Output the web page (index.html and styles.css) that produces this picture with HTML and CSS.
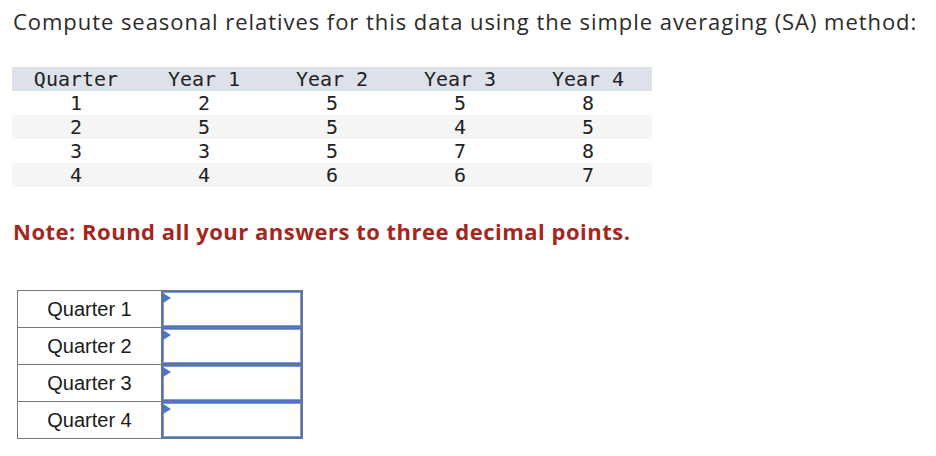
FILE: index.html
```html
<!DOCTYPE html>
<html>
<head>
<meta charset="utf-8">
<link rel="stylesheet" href="styles.css">
</head>
<body>
<p class="prompt">Compute seasonal relatives for this data using the simple averaging (SA) method:</p>
<table class="data">
  <thead>
    <tr><th>Quarter</th><th>Year 1</th><th>Year 2</th><th>Year 3</th><th>Year 4</th></tr>
  </thead>
  <tbody>
    <tr><td>1</td><td>2</td><td>5</td><td>5</td><td>8</td></tr>
    <tr><td>2</td><td>5</td><td>5</td><td>4</td><td>5</td></tr>
    <tr><td>3</td><td>3</td><td>5</td><td>7</td><td>8</td></tr>
    <tr><td>4</td><td>4</td><td>6</td><td>6</td><td>7</td></tr>
  </tbody>
</table>
<p class="note">Note: Round all your answers to three decimal points.</p>
<table class="answers">
  <tr><td class="label">Quarter 1</td><td class="field"><div class="input"><span class="flag"></span></div></td></tr>
  <tr><td class="label">Quarter 2</td><td class="field"><div class="input"><span class="flag"></span></div></td></tr>
  <tr><td class="label">Quarter 3</td><td class="field"><div class="input"><span class="flag"></span></div></td></tr>
  <tr><td class="label">Quarter 4</td><td class="field"><div class="input"><span class="flag"></span></div></td></tr>
</table>
</body>
</html>
```
FILE: styles.css
```css
html, body {
  margin: 0;
  padding: 0;
  background: #ffffff;
}
body {
  padding: 0 0 0 13px;
  color: #222222;
  font-family: "Open Sans", "Liberation Sans", sans-serif;
}
.prompt {
  margin: 7px 0 0 0;
  font-size: 22px;
  line-height: 28px;
  letter-spacing: 0.95px;
  color: #2b2b2b;
  white-space: nowrap;
}
.data {
  margin: 32px 0 0 -1px;
  border-collapse: collapse;
  font-family: "DejaVu Sans Mono", monospace;
  font-size: 20px;
  color: #222222;
}
.data th, .data td {
  width: 128px;
  padding: 0;
  height: 24px;
  line-height: 24px;
  text-align: center;
  font-weight: normal;
}
.data thead tr {
  background: #dde1ea;
}
.data tbody tr:nth-child(even) {
  background: #f5f5f5;
}
.note {
  margin: 30px 0 0 0;
  font-size: 22px;
  line-height: 28px;
  letter-spacing: 0.5px;
  font-weight: 700;
  color: #a3271d;
  white-space: nowrap;
}
.answers {
  margin: 45px 0 0 4px;
  border-collapse: collapse;
  font-family: "Liberation Sans", Arial, sans-serif;
  font-size: 20px;
  color: #1a1a1a;
}
.answers td {
  border: 1px solid #777777;
  padding: 0;
}
.answers .label {
  width: 143px;
  height: 36px;
  text-align: center;
}
.answers .field {
  width: 140px;
}
.input {
  position: relative;
  height: 36px;
  box-sizing: border-box;
  border: 1px solid #4a73bb;
  box-shadow: inset 0 0 0 1px #7d9dd3;
  background: #ffffff;
}
.flag {
  position: absolute;
  left: 0;
  top: 1px;
  width: 0;
  height: 0;
  border-top: 5px solid transparent;
  border-bottom: 5px solid transparent;
  border-left: 8px solid #4c76bf;
}
```
